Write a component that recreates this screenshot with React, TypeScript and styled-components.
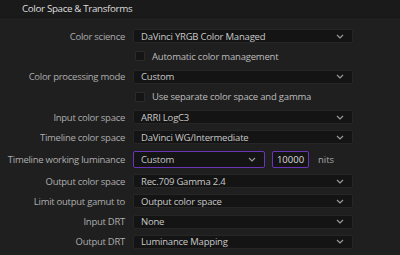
import React from "react";
import styled, { createGlobalStyle } from "styled-components";

const Global = createGlobalStyle`
  html, body {
    margin: 0;
    padding: 0;
    background: #1f1f1f;
  }
  body {
    font-family: "Open Sans", "Noto Sans", sans-serif;
    -webkit-font-smoothing: antialiased;
  }
`;

const Panel = styled.div`
  width: 400px;
  height: 255px;
  background: #1f1f1f;
  overflow: hidden;
`;

const Header = styled.div`
  height: 17px;
  background: #1a1a1a;
  border-bottom: 1px solid #171717;
  display: flex;
  align-items: center;
  padding-left: 22px;
  color: #dedede;
  font-size: 9.8px;
  letter-spacing: -0.35px;
`;

const Body = styled.div`
  display: grid;
  grid-template-columns: 125px 1fr;
  column-gap: 8px;
  row-gap: 6.3px;
  padding-top: 11px;
  align-items: center;
`;

const Label = styled.div`
  text-align: right;
  color: #adadad;
  font-size: 9.5px;
  letter-spacing: -0.27px;
  white-space: nowrap;
`;

const Select = styled.div<{ $width?: number; $active?: boolean }>`
  box-sizing: border-box;
  width: ${(p) => p.$width ?? 220}px;
  height: ${(p) => (p.$active ? 17 : 14)}px;
  background: #141414;
  border: 1px solid ${(p) => (p.$active ? "#6a35b8" : "#262626")};
  border-radius: 2px;
  display: flex;
  align-items: center;
  justify-content: space-between;
  padding: 0 8px 0 7px;
  color: #c8c8c8;
  font-size: 9.5px;
  letter-spacing: -0.2px;
`;

const Chevron = () => (
  <svg width="8" height="5" viewBox="0 0 8 5">
    <path d="M1 1 L4 4 L7 1" stroke="#9a9a9a" strokeWidth="1.2" fill="none" />
  </svg>
);

const CheckRow = styled.div`
  display: flex;
  align-items: center;
  gap: 7px;
  padding-left: 2px;
  color: #bdbdbd;
  font-size: 9.5px;
  letter-spacing: -0.2px;
  height: 14px;
`;

const Box = styled.span`
  box-sizing: border-box;
  width: 10px;
  height: 10px;
  background: #151515;
  border: 1px solid #2a2a2a;
  border-radius: 1px;
`;

const Inline = styled.div`
  display: flex;
  align-items: center;
  gap: 7px;
`;

const NumberBox = styled.div`
  box-sizing: border-box;
  width: 37px;
  height: 17px;
  background: #141414;
  border: 1px solid #6a35b8;
  border-radius: 2px;
  display: flex;
  align-items: center;
  justify-content: center;
  color: #dcdcdc;
  font-size: 9.5px;
`;

const Unit = styled.span`
  color: #a8a8a8;
  font-size: 9.5px;
  margin-left: 2px;
`;

type Row =
  | { kind: "select"; label: string; value: string }
  | { kind: "check"; text: string };

const rows: Row[] = [
  { kind: "select", label: "Color science", value: "DaVinci YRGB Color Managed" },
  { kind: "check", text: "Automatic color management" },
  { kind: "select", label: "Color processing mode", value: "Custom" },
  { kind: "check", text: "Use separate color space and gamma" },
  { kind: "select", label: "Input color space", value: "ARRI LogC3" },
  { kind: "select", label: "Timeline color space", value: "DaVinci WG/Intermediate" },
];

const rowsAfter: Row[] = [
  { kind: "select", label: "Output color space", value: "Rec.709 Gamma 2.4" },
  { kind: "select", label: "Limit output gamut to", value: "Output color space" },
  { kind: "select", label: "Input DRT", value: "None" },
  { kind: "select", label: "Output DRT", value: "Luminance Mapping" },
];

const renderRow = (r: Row, i: number) =>
  r.kind === "select" ? (
    <React.Fragment key={i}>
      <Label>{r.label}</Label>
      <Select>
        <span>{r.value}</span>
        <Chevron />
      </Select>
    </React.Fragment>
  ) : (
    <React.Fragment key={i}>
      <span />
      <CheckRow>
        <Box />
        {r.text}
      </CheckRow>
    </React.Fragment>
  );

export default function App() {
  return (
    <Panel>
      <Global />
      <Header>Color Space &amp; Transforms</Header>
      <Body>
        {rows.map(renderRow)}
        <Label>Timeline working luminance</Label>
        <Inline>
          <Select $width={132} $active>
            <span>Custom</span>
            <Chevron />
          </Select>
          <NumberBox>10000</NumberBox>
          <Unit>nits</Unit>
        </Inline>
        {rowsAfter.map((r, i) => renderRow(r, i + 100))}
      </Body>
    </Panel>
  );
}
